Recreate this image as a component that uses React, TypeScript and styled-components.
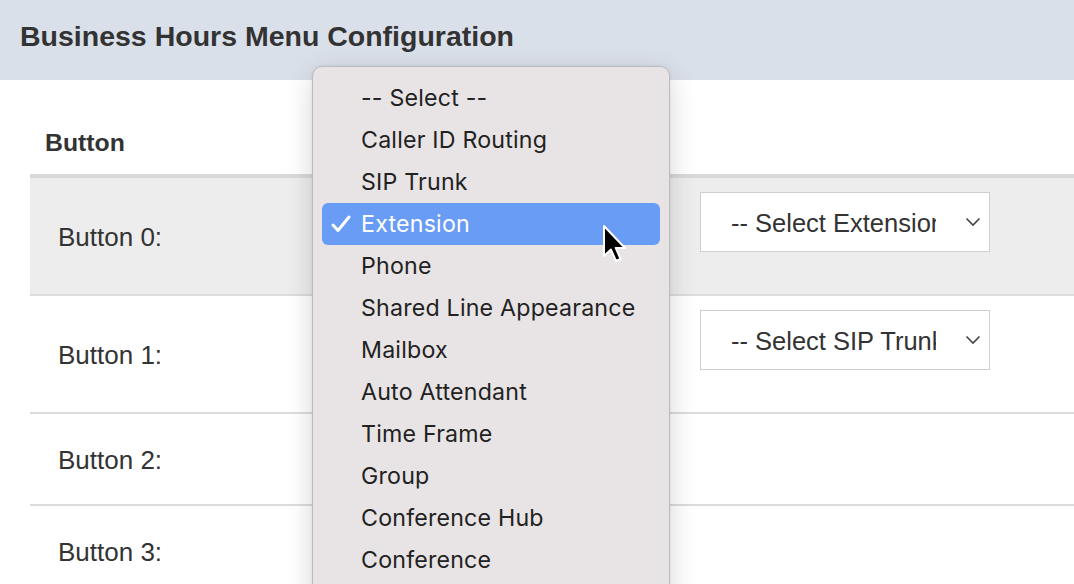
import React from "react";
import styled, { createGlobalStyle } from "styled-components";

const Global = createGlobalStyle`
  html, body { margin: 0; padding: 0; background: #fff; overflow: hidden; }
  body { font-family: "Liberation Sans", Arial, sans-serif; color: #333; }
`;

const Page = styled.div`
  position: relative;
  width: 1074px;
  height: 584px;
  overflow: hidden;
  background: #fff;
`;

const Header = styled.div`
  height: 80px;
  background: #dae0ea;
  box-sizing: border-box;
  padding: 19px 0 0 20px;
`;

const Title = styled.h1`
  margin: 0;
  font-size: 28.5px;
  font-weight: 700;
  color: #333;
  line-height: 34px;
`;

const Content = styled.div`
  padding: 30px 0 0 30px;
`;

const Table = styled.div`
  display: flex;
  flex-direction: column;
`;

const HeadRow = styled.div`
  height: 68px;
  display: flex;
  align-items: center;
  padding: 2px 0 0 15px;
  box-sizing: border-box;
  border-bottom: 4px solid #d9d9d9;
  font-size: 24.8px;
  font-weight: 700;
  color: #333;
`;

const Row = styled.div<{ $shade?: boolean; $tall?: boolean }>`
  display: grid;
  grid-template-columns: 282px 388px 1fr;
  height: ${(p) => (p.$tall ? 116 : 90)}px;
  background: ${(p) => (p.$shade ? "#ededed" : "#fff")};
  border-bottom: 2px solid #dcdcdc;
`;

const Label = styled.div`
  display: flex;
  align-items: center;
  padding: 2px 0 0 28px;
  font-size: 26px;
  color: #333;
`;

const Cell = styled.div`
  padding-top: 14px;
`;

const SelectBox = styled.div`
  width: 290px;
  height: 60px;
  box-sizing: border-box;
  border: 1px solid #cfcfcf;
  background: #fff;
  display: flex;
  align-items: center;
  padding: 3px 8px 0 30px;
`;

const SelectText = styled.span`
  width: 205px;
  overflow: hidden;
  white-space: nowrap;
  font-size: 25.5px;
  color: #333;
  flex: none;
`;

const Chevron = styled.svg`
  margin-left: auto;
  margin-top: -4px;
`;

const Menu = styled.div`
  position: absolute;
  left: 312px;
  top: 66px;
  width: 358px;
  height: 560px;
  box-sizing: border-box;
  background: #e8e4e5;
  border: 1px solid #bdbbbc;
  border-radius: 10px;
  box-shadow: 0 8px 28px rgba(0, 0, 0, 0.16), 0 0 4px rgba(0, 0, 0, 0.06);
  padding: 10px 9px 0;
  font-family: Inter, "Noto Sans", sans-serif;
`;

const Item = styled.div<{ $active?: boolean }>`
  height: 42px;
  display: flex;
  align-items: center;
  padding-left: 39px;
  position: relative;
  font-size: 23.2px;
  letter-spacing: 0.2px;
  border-radius: 6px;
  color: ${(p) => (p.$active ? "#fff" : "#222")};
  background: ${(p) => (p.$active ? "#699cf5" : "transparent")};
`;

const Check = styled.svg`
  position: absolute;
  left: 9px;
  top: 12px;
`;

const Cursor = styled.svg`
  position: absolute;
  left: 602px;
  top: 224px;
`;

const options = [
  "-- Select --",
  "Caller ID Routing",
  "SIP Trunk",
  "Extension",
  "Phone",
  "Shared Line Appearance",
  "Mailbox",
  "Auto Attendant",
  "Time Frame",
  "Group",
  "Conference Hub",
  "Conference",
];

const Select = ({ text }: { text: string }) => (
  <SelectBox>
    <SelectText>{text}</SelectText>
    <Chevron width="16" height="10" viewBox="0 0 16 10">
      <polyline points="1.5,1.5 8,8 14.5,1.5" fill="none" stroke="#444" strokeWidth="1.6" />
    </Chevron>
  </SelectBox>
);

export default function App() {
  return (
    <Page>
      <Global />
      <Header>
        <Title>Business Hours Menu Configuration</Title>
      </Header>
      <Content>
        <Table>
          <HeadRow>Button</HeadRow>
          <Row $shade $tall>
            <Label>Button 0:</Label>
            <div />
            <Cell>
              <Select text="-- Select Extension" />
            </Cell>
          </Row>
          <Row $tall>
            <Label>Button 1:</Label>
            <div />
            <Cell>
              <Select text="-- Select SIP Trunk" />
            </Cell>
          </Row>
          <Row>
            <Label>Button 2:</Label>
            <div />
            <div />
          </Row>
          <Row>
            <Label>Button 3:</Label>
            <div />
            <div />
          </Row>
        </Table>
      </Content>
      <Menu>
        {options.map((o) => (
          <Item key={o} $active={o === "Extension"}>
            {o === "Extension" && (
              <Check width="20" height="18" viewBox="0 0 20 18">
                <polyline points="2,10 7,15.5 18,2" fill="none" stroke="#fff" strokeWidth="3" strokeLinecap="round" strokeLinejoin="round" />
              </Check>
            )}
            {o}
          </Item>
        ))}
      </Menu>
      <Cursor width="26" height="40" viewBox="0 0 13 20">
        <path d="M1,1 L1,16 L4.5,12.8 L7,18.5 L9.3,17.5 L6.9,12 L11.5,12 Z" fill="#000" stroke="#fff" strokeWidth="1" strokeLinejoin="round" />
      </Cursor>
    </Page>
  );
}
